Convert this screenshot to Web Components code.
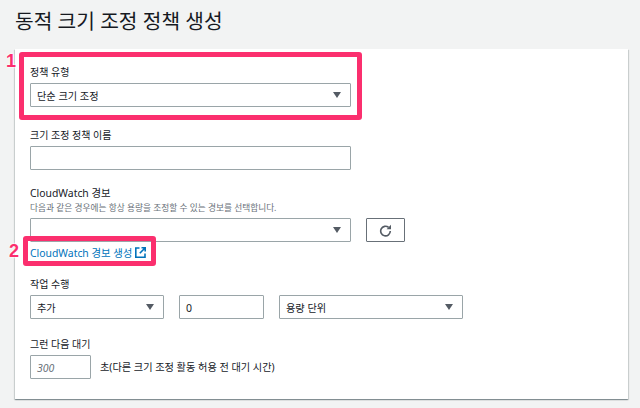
<!DOCTYPE html>
<html lang="ko">
<head>
<meta charset="utf-8">
<title>동적 크기 조정 정책 생성</title>
<style>
    html, body { margin: 0; padding: 0; }
    body {
        background: #f2f3f3;
        width: 640px;
        height: 408px;
        overflow: hidden;
        font-family: "Noto Sans", "Noto Sans CJK KR", sans-serif;
        color: #16191f;
    }
</style>
</head>
<body>
<policy-page>
    <form-field label="정책 유형" style="--bottom: 21px">
        <select-box value="단순 크기 조정" width="321"></select-box>
    </form-field>
    <form-field label="크기 조정 정책 이름" style="--bottom: 16px">
        <text-box width="321"></text-box>
    </form-field>
    <form-field label="CloudWatch 경보" hint="다음과 같은 경우에는 항상 용량을 조정할 수 있는 경보를 선택합니다." style="--bottom: 17px; --label-size: 10.4px">
        <div style="display: flex; gap: 15px">
            <select-box width="321"></select-box>
            <refresh-button></refresh-button>
        </div>
        <ext-link>CloudWatch 경보 생성</ext-link>
    </form-field>
    <form-field label="작업 수행" style="--bottom: 18px">
        <div style="display: flex; gap: 15px">
            <select-box value="추가" width="134"></select-box>
            <text-box value="0" width="85"></text-box>
            <select-box value="용량 단위" width="184"></select-box>
        </div>
    </form-field>
    <form-field label="그런 다음 대기" style="--bottom: 0">
        <div style="display: flex; gap: 9px; align-items: center">
            <text-box placeholder="300" width="61"></text-box>
            <span style="font-size: 10.2px; color: #16191f; padding-bottom: 2px">초(다른 크기 조정 활동 허용 전 대기 시간)</span>
        </div>
    </form-field>
</policy-page>

<script>
const fontStack = '"Noto Sans", "Noto Sans CJK KR", sans-serif';

class PolicyPage extends HTMLElement {
    constructor() {
        super();
        this.attachShadow({ mode: 'open' });
        this.shadowRoot.innerHTML = `
            <style>
                :host { display: block; font-family: ${fontStack}; position: relative; width: 640px; height: 408px; }
                h1 {
                    margin: 0;
                    padding: 8px 0 0 15px;
                    height: 49px;
                    box-sizing: border-box;
                    font-size: 20.3px;
                    line-height: 26px;
                    font-weight: 400;
                    color: #16191f;
                }
                .card {
                    margin-left: 15px;
                    width: 613px;
                    height: 350px;
                    box-sizing: border-box;
                    background: #fff;
                    padding: 16px 15px 0;
                    box-shadow: 0 1px 1px 0 rgba(0, 28, 36, .3), 1px 1px 1px 0 rgba(0, 28, 36, .12), -1px 1px 1px 0 rgba(0, 28, 36, .12);
                }
                .mark {
                    position: absolute;
                    box-sizing: border-box;
                    border: 5px solid #fb2f6e;
                    border-radius: 3px;
                }
                .num {
                    position: absolute;
                    color: #fb2f6e;
                    font: 700 18px/18px "Liberation Sans", sans-serif;
                    text-shadow: 0 0 2px #fff, 0 0 2px #fff, 0 0 2px #fff;
                }
            </style>
            <h1>동적 크기 조정 정책 생성</h1>
            <div class="card"><slot></slot></div>
            <div class="mark" style="left: 19px; top: 52px; width: 343px; height: 68px"></div>
            <span class="num" style="left: 6px; top: 52px">1</span>
            <div class="mark" style="left: 23px; top: 236px; width: 133px; height: 30px"></div>
            <span class="num" style="left: 9px; top: 242px">2</span>
        `;
    }
}

class FormField extends HTMLElement {
    constructor() {
        super();
        this.attachShadow({ mode: 'open' });
        const hint = this.getAttribute('hint');
        this.shadowRoot.innerHTML = `
            <style>
                :host { display: block; margin-bottom: var(--bottom, 16px); }
                .label { font-size: var(--label-size, 10px); line-height: 14px; color: #16191f; margin-bottom: 4px; }
                .hint { font-size: 8.7px; line-height: 11px; color: #687078; margin: -1px 0 4px; }
            </style>
            <div class="label">${this.getAttribute('label')}</div>
            ${hint ? `<div class="hint">${hint}</div>` : ''}
            <slot></slot>
        `;
    }
}

class SelectBox extends HTMLElement {
    constructor() {
        super();
        this.attachShadow({ mode: 'open' });
        this.shadowRoot.innerHTML = `
            <style>
                :host { display: block; width: ${this.getAttribute('width')}px; }
                .box {
                    box-sizing: border-box;
                    height: 24px;
                    border: 1px solid #9aa5a8;
                    border-radius: 1px;
                    padding: 0 9px 0 6px;
                    display: flex;
                    align-items: center;
                    justify-content: space-between;
                    font-size: 10.2px;
                    color: #16191f;
                    background: #fff;
                }
                svg { width: 8px; height: 6px; display: block; }
            </style>
            <div class="box">
                <span>${this.getAttribute('value') || ''}</span>
                <svg viewBox="0 0 8 6"><path d="M0 0h8L4 6z" fill="#545b64"/></svg>
            </div>
        `;
    }
}

class TextBox extends HTMLElement {
    constructor() {
        super();
        this.attachShadow({ mode: 'open' });
        const placeholder = this.getAttribute('placeholder');
        this.shadowRoot.innerHTML = `
            <style>
                :host { display: block; width: ${this.getAttribute('width')}px; flex: none; }
                .box {
                    box-sizing: border-box;
                    height: 24px;
                    border: 1px solid #9aa5a8;
                    border-radius: 1px;
                    padding: 1px 6px 0;
                    display: flex;
                    align-items: center;
                    font-size: 10.5px;
                    background: #fff;
                    color: #16191f;
                }
                .ph { color: #687078; font-style: italic; }
            </style>
            <div class="box">${placeholder ? `<span class="ph">${placeholder}</span>` : (this.getAttribute('value') || '')}</div>
        `;
    }
}

class RefreshButton extends HTMLElement {
    constructor() {
        super();
        this.attachShadow({ mode: 'open' });
        this.shadowRoot.innerHTML = `
            <style>
                :host { display: block; }
                .btn {
                    box-sizing: border-box;
                    width: 39px;
                    height: 24px;
                    border: 1px solid #687078;
                    border-radius: 1px;
                    display: flex;
                    align-items: center;
                    justify-content: center;
                    background: #fff;
                }
                svg { width: 13px; height: 13px; display: block; }
            </style>
            <div class="btn">
                <svg viewBox="0 0 13 13" fill="none" stroke="#545b64" stroke-width="1.6">
                    <path d="M9.6 3.4A4.8 4.8 0 1 0 11.3 7"/>
                    <path d="M12 .8v4.4H7.6z" fill="#545b64" stroke="none"/>
                </svg>
            </div>
        `;
    }
}

class ExtLink extends HTMLElement {
    constructor() {
        super();
        this.attachShadow({ mode: 'open' });
        this.shadowRoot.innerHTML = `
            <style>
                :host { display: flex; width: fit-content; align-items: center; gap: 3px; margin-top: 2px; height: 16px; font-size: 10.4px; color: #0073bb; }
                svg { width: 11px; height: 11px; display: block; }
            </style>
            <slot></slot>
            <svg viewBox="0 0 11 11" fill="none" stroke="#0073bb" stroke-width="1.6">
                <path d="M4.5 1H.8v9.2H10V6.5"/>
                <path d="M6.5.8h3.7v3.7M10.2.8 4.8 6.2"/>
            </svg>
        `;
    }
}

customElements.define('policy-page', PolicyPage);
customElements.define('form-field', FormField);
customElements.define('select-box', SelectBox);
customElements.define('text-box', TextBox);
customElements.define('refresh-button', RefreshButton);
customElements.define('ext-link', ExtLink);
</script>
</body>
</html>
